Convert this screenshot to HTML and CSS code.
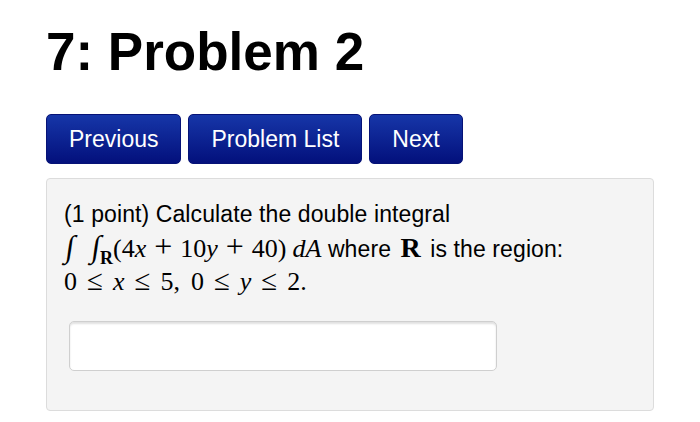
FILE: index.html
```html
<!DOCTYPE html>
<html lang="en">
<head>
    <meta charset="UTF-8">
    <title>7: Problem 2</title>
    <meta name="viewport" content="width=device-width, initial-scale=1.0">
    <link rel="stylesheet" href="styles.css">
</head>
<body>
    <div class="page">
        <h1 class="title">7: Problem 2</h1>
        <div class="nav-buttons">
            <button class="nav-btn">Previous</button>
            <button class="nav-btn">Problem List</button>
            <button class="nav-btn">Next</button>
        </div>
        <div class="problem-box">
            <div class="problem-text">
                <div class="line">(1 point) Calculate the double integral</div>
                <div class="line"><span class="math"><span class="int">∫</span><span class="int">∫</span><sub class="sub-r">R</sub>(4<i>x</i><span class="bin">+</span>10<i>y</i><span class="bin">+</span>40)<i class="da">dA</i></span> where <span class="math big-r">R</span> is the region:</div>
                <div class="line"><span class="math">0<span class="rel">≤</span><i>x</i><span class="rel">≤</span>5<span class="comma">,</span>0<span class="rel">≤</span><i>y</i><span class="rel">≤</span>2.</span></div>
            </div>
            <input type="text" class="answer-input">
        </div>
    </div>
</body>
</html>
```

FILE: styles.css
```css
body {
    margin: 0;
    padding: 0;
    background: #fff;
    font-family: "Liberation Sans", Arial, sans-serif;
    color: #000;
}
.page {
    padding: 23px 46px 0 46px;
}
.title {
    font-size: 53px;
    font-weight: bold;
    line-height: 58px;
    margin: 0 0 33px 0;
}
.nav-buttons {
    display: flex;
    gap: 7px;
    margin-bottom: 14px;
}
.nav-btn {
    height: 50px;
    padding: 0 22px;
    font-family: "Liberation Sans", Arial, sans-serif;
    font-size: 23px;
    color: #fff;
    background: linear-gradient(#1636a8, #03107c);
    border: 1px solid #061276;
    border-radius: 5px;
}
.problem-box {
    background: #f4f4f4;
    border: 1px solid #dcdcdc;
    border-radius: 4px;
    height: 233px;
    padding: 18px 17px 0 17px;
    box-sizing: border-box;
}
.problem-text {
    font-size: 23px;
    letter-spacing: 0.1px;
}
.line {
    height: 34px;
    line-height: 34px;
    white-space: nowrap;
}
.math {
    font-family: "Liberation Serif", "Times New Roman", serif;
    font-size: 26px;
    letter-spacing: 0;
}
.int {
    font-style: italic;
    font-size: 31px;
    line-height: 0;
    display: inline-block;
    margin-left: 2px;
    margin-right: 15px;
    transform: skewX(-8deg);
}
.int + .int {
    margin-right: 0;
}
.sub-r {
    font-weight: bold;
    font-size: 18px;
    vertical-align: -7px;
    line-height: 0;
}
.bin {
    font-size: 32px;
    line-height: 0;
    margin: 0 8px;
}
.rel {
    font-size: 29px;
    line-height: 0;
    margin: 0 10px;
}
.comma {
    margin-right: 11px;
}
.da {
    margin-left: 6px;
}
.big-r {
    font-weight: bold;
    font-size: 28px;
    margin: 0 3px;
}
.answer-input {
    display: block;
    margin: 22px 0 0 5px;
    width: 428px;
    height: 50px;
    box-sizing: border-box;
    border: 1px solid #cfcfcf;
    border-radius: 5px;
    background: #fff;
    box-shadow: inset 0 2px 2px rgba(0,0,0,0.12);
}
```
